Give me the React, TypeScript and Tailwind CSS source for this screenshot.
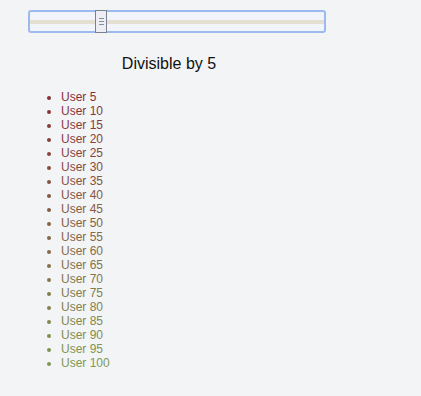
import React from "react";

const start = [136, 48, 56];
const end = [128, 152, 84];

export default function App() {
  const items = Array.from({ length: 20 }, (_, i) => (i + 1) * 5);
  return (
    <div className="w-[421px] h-[396px] bg-[#f3f4f6]" style={{ fontFamily: "Arial, 'Liberation Sans', sans-serif" }}>
      <div className="pt-[10px] pl-[28px]">
        <div className="relative w-[298px] h-[23px] border-2 border-[#9db9ee] rounded-[3px] bg-[#f1f4f9] flex items-center">
          <div className="w-full h-[4px] bg-[#e4dfd3]" />
          <div className="absolute left-[65px] top-[-2px] w-[12px] h-[23px] border border-[#7b8192] bg-[#eceef3] flex flex-col items-center justify-center gap-[2px]">
            <div className="w-[5px] h-px bg-[#8a8f9c]" />
            <div className="w-[5px] h-px bg-[#8a8f9c]" />
            <div className="w-[5px] h-px bg-[#8a8f9c]" />
          </div>
        </div>
      </div>
      <div className="w-[338px] text-center text-[16px] text-[#111] mt-[21px] leading-[20px]">Divisible by 5</div>
      <ul className="mt-[16px] pl-[61px] list-disc text-[12px] leading-[14px]">
        {items.map((n, i) => {
          const t = i / 19;
          const c = start.map((s, k) => Math.round(s + (end[k] - s) * t));
          return (
            <li key={n} style={{ color: `rgb(${c[0]},${c[1]},${c[2]})` }}>
              User {n}
            </li>
          );
        })}
      </ul>
    </div>
  );
}
